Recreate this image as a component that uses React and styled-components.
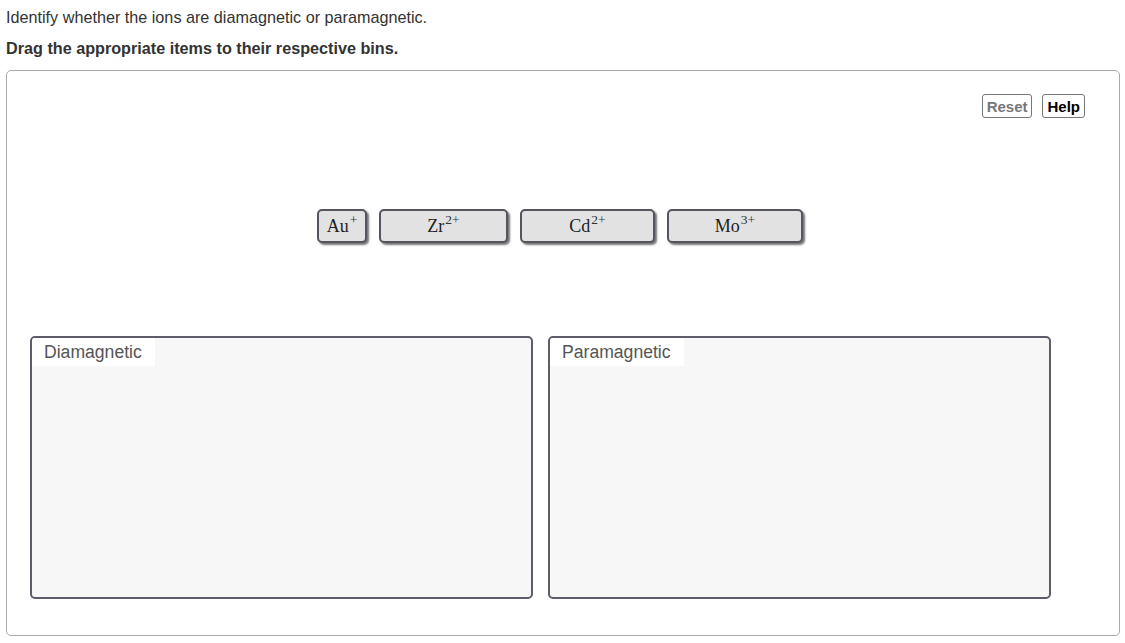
import React from "react";
import styled, { createGlobalStyle } from "styled-components";

const Global = createGlobalStyle`
  body {
    margin: 0;
    background: #fff;
    font-family: "Liberation Sans", Arial, sans-serif;
    color: #333;
  }
`;

const Page = styled.div`
  padding: 0 5px 0 6px;
`;

const Intro = styled.p`
  margin: 0;
  padding-top: 6px;
  font-size: 16.2px;
  line-height: 22px;
  color: #333;
`;

const Instruction = styled.p`
  margin: 9px 0 0;
  font-size: 16.2px;
  line-height: 22px;
  font-weight: bold;
  color: #333;
`;

const Board = styled.div`
  margin-top: 11px;
  height: 566px;
  box-sizing: border-box;
  border: 1px solid #aaa;
  border-radius: 5px;
  display: flex;
  flex-direction: column;
  padding: 23px 34px 0 23px;
`;

const Toolbar = styled.div`
  display: flex;
  justify-content: flex-end;
  gap: 10px;
`;

const ToolButton = styled.button`
  font-family: "Liberation Sans", Arial, sans-serif;
  font-size: 15px;
  font-weight: bold;
  height: 24px;
  padding: 0 4px;
  background: #fff;
  border: 1px solid #777;
  border-radius: 3px;
  color: ${(p) => (p.muted ? "#777" : "#000")};
`;

const Tray = styled.div`
  margin-top: 91px;
  display: flex;
  justify-content: center;
  gap: 12px;
  padding-left: 5px;
`;

const Chip = styled.div`
  width: ${(p) => p.w}px;
  height: 34px;
  box-sizing: border-box;
  border: 2px solid #55555f;
  border-radius: 5px;
  background: #e2e2e2;
  box-shadow: 2px 2px 2px #777;
  display: flex;
  align-items: center;
  justify-content: center;
  font-family: "Liberation Serif", "DejaVu Serif", serif;
  font-size: 18px;
  color: #222;

  sup {
    font-size: 13.5px;
    font-weight: 300;
    line-height: 0;
    vertical-align: 0;
    position: relative;
    top: -6px;
    margin-left: 1px;
    color: #333;
  }
`;

const Bins = styled.div`
  margin-top: 93px;
  display: flex;
  gap: 15px;
`;

const Bin = styled.div`
  width: 503px;
  height: 263px;
  box-sizing: border-box;
  border: 2px solid #5c5c6a;
  border-radius: 5px;
  background: #f7f7f7;
  overflow: hidden;
`;

const BinLabel = styled.div`
  display: inline-block;
  background: #fff;
  color: #555;
  font-size: 17.6px;
  line-height: 27px;
  padding: 1px 13px 0 12px;
`;

const ions = [
  { base: "Au", charge: "+", w: 50 },
  { base: "Zr", charge: "2+", w: 129 },
  { base: "Cd", charge: "2+", w: 135 },
  { base: "Mo", charge: "3+", w: 136 },
];

export default function App() {
  return (
    <Page>
      <Global />
      <Intro>Identify whether the ions are diamagnetic or paramagnetic.</Intro>
      <Instruction>Drag the appropriate items to their respective bins.</Instruction>
      <Board>
        <Toolbar>
          <ToolButton muted>Reset</ToolButton>
          <ToolButton>Help</ToolButton>
        </Toolbar>
        <Tray>
          {ions.map((ion) => (
            <Chip key={ion.base} w={ion.w}>
              {ion.base}
              <sup>{ion.charge}</sup>
            </Chip>
          ))}
        </Tray>
        <Bins>
          <Bin>
            <BinLabel>Diamagnetic</BinLabel>
          </Bin>
          <Bin>
            <BinLabel>Paramagnetic</BinLabel>
          </Bin>
        </Bins>
      </Board>
    </Page>
  );
}
